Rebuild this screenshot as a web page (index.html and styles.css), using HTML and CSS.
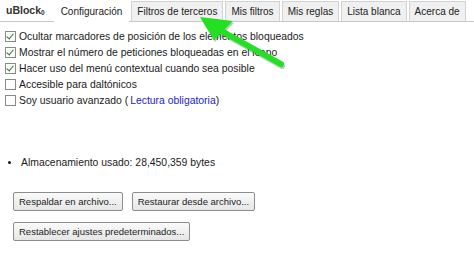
FILE: index.html
```html
<!DOCTYPE html>
<html lang="es">
<head>
    <meta charset="UTF-8">
    <title>uBlock - Configuración</title>
    <link rel="stylesheet" href="styles.css">
</head>
<body>

<header class="tabs">
    <span class="logo">uBlock<sub>0</sub></span>
    <a class="tab active">Configuración</a>
    <a class="tab">Filtros de terceros</a>
    <a class="tab">Mis filtros</a>
    <a class="tab">Mis reglas</a>
    <a class="tab">Lista blanca</a>
    <a class="tab">Acerca de</a>
</header>

<section class="options">
    <ul class="checks">
        <li><span class="box checked"></span>Ocultar marcadores de posición de los elementos bloqueados</li>
        <li><span class="box checked"></span>Mostrar el número de peticiones bloqueadas en el icono</li>
        <li><span class="box checked"></span>Hacer uso del menú contextual cuando sea posible</li>
        <li><span class="box"></span>Accesible para daltónicos</li>
        <li><span class="box"></span>Soy usuario avanzado ( <a class="link">Lectura obligatoria</a>)</li>
    </ul>

    <ul class="storage">
        <li>Almacenamiento usado: 28,450,359 bytes</li>
    </ul>

    <div class="buttons">
        <button>Respaldar en archivo...</button>
        <button>Restaurar desde archivo...</button>
    </div>
    <div class="buttons">
        <button>Restablecer ajustes predeterminados...</button>
    </div>
</section>

<svg class="arrow" width="474" height="274" viewBox="0 0 474 274">
    <g transform="translate(1,2)" fill="#3a6a3a" opacity=".35">
        <line x1="218" y1="29" x2="281" y2="64" stroke="#3a6a3a" stroke-width="6" stroke-linecap="round"/>
        <polygon points="200,17 233,21 214,40"/>
    </g>
    <line x1="218" y1="29" x2="281" y2="64" stroke="#22e022" stroke-width="6" stroke-linecap="round"/>
    <polygon points="200,17 233,21 214,40" fill="#22e022"/>
</svg>

</body>
</html>
```

FILE: styles.css
```css
body {
    margin: 0;
    padding: 0;
    background-color: #ffffff;
    font-family: "Liberation Sans", Arial, sans-serif;
    font-size: 10.4px;
    color: #1a1a1a;
    width: 474px;
    height: 274px;
    overflow: hidden;
    position: relative;
}

.tabs {
    display: flex;
    align-items: flex-end;
    height: 21px;
    padding-left: 5px;
    border-bottom: 1px solid #c8c8c8;
}

.tabs .logo {
    font-weight: bold;
    font-size: 10.5px;
    color: #333;
    padding: 0 9px 5px 1px;
}

.tabs .logo sub {
    font-size: 6.5px;
    vertical-align: -1px;
}

.tabs .tab {
    height: 20px;
    box-sizing: border-box;
    padding: 4px 5px 0;
    margin-right: 2px;
    background-color: #f0f0f0;
    border: 1px solid #d2d2d2;
    border-bottom: none;
    font-size: 10px;
    color: #222;
    white-space: nowrap;
}

.tabs .tab.active {
    background-color: #ffffff;
    border-color: #ffffff;
    height: 21px;
    margin-bottom: -1px;
    padding: 4px 6px 0;
}

.options {
    padding: 6px 0 0 5px;
}

.checks {
    list-style: none;
    margin: 0;
    padding: 0;
}

.checks li {
    display: flex;
    align-items: center;
    height: 16px;
    white-space: nowrap;
}

.box {
    width: 9px;
    height: 9px;
    border: 1px solid #8a8a8a;
    margin-right: 3px;
    background-color: #fdfdfd;
    position: relative;
}

.box.checked::after {
    content: "";
    position: absolute;
    left: 2px;
    top: 0;
    width: 3px;
    height: 6px;
    border: solid #2a7a2a;
    border-width: 0 1.5px 1.5px 0;
    transform: rotate(40deg);
}

.link {
    color: #2222cc;
    margin-left: 2px;
}

.storage {
    margin: 49px 0 0;
    padding-left: 16px;
}

.storage li {
    height: 16px;
}

.buttons {
    display: flex;
    gap: 9px;
    padding-left: 8px;
    margin-top: 19px;
}

.buttons + .buttons {
    margin-top: 11px;
}

.buttons button {
    font-family: "Liberation Sans", Arial, sans-serif;
    font-size: 9.5px;
    color: #222;
    height: 19px;
    padding: 0 5px;
    background: linear-gradient(#fafafa, #e6e6e6);
    border: 1px solid #8d8d8d;
    border-radius: 2px;
}

.arrow {
    position: absolute;
    left: 0;
    top: 0;
    pointer-events: none;
}
```
